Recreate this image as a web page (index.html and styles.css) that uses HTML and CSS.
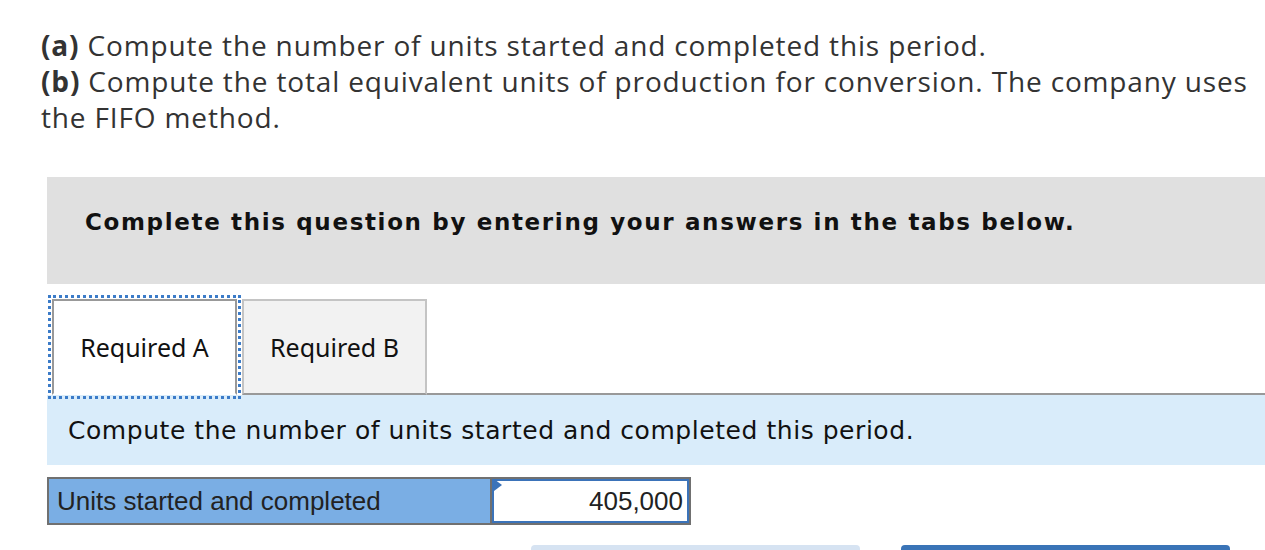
FILE: index.html
```html
<!DOCTYPE html>
<html>
<head>
<meta charset="utf-8">
<link rel="stylesheet" href="styles.css">
</head>
<body>
<div class="question">
  <p><b>(a)</b> Compute the number of units started and completed this period.</p>
  <p><b>(b)</b> Compute the total equivalent units of production for conversion. The company uses<br>the FIFO method.</p>
</div>
<div class="section">
  <div class="instructions">Complete this question by entering your answers in the tabs below.</div>
  <div class="tabs">
    <div class="tab tab-active">Required A</div>
    <div class="tab tab-inactive">Required B</div>
    <div class="tab-fill"></div>
  </div>
  <div class="prompt">Compute the number of units started and completed this period.</div>
  <div class="answer-row">
    <div class="answer-label">Units started and completed</div>
    <div class="answer-cell"><span class="marker"></span><span class="answer-value">405,000</span></div>
  </div>
  <div class="nav">
    <div class="nav-btn nav-prev"></div>
    <div class="nav-btn nav-next"></div>
  </div>
</div>
</body>
</html>
```
FILE: styles.css
```css
html, body {
  margin: 0;
  padding: 0;
  background: #fff;
  overflow: hidden;
}
.question {
  padding: 27px 0 0 41px;
  font-family: "Open Sans", "Lato", sans-serif;
  font-size: 28px;
  letter-spacing: 0.85px;
  line-height: 36px;
  color: #333;
  white-space: nowrap;
}
.question p {
  margin: 0;
}
.question b {
  font-weight: 700;
}
.section {
  margin: 42px 0 0 47px;
}
.instructions {
  background: #e0e0e0;
  height: 107px;
  box-sizing: border-box;
  display: flex;
  align-items: center;
  padding: 0 0 18px 38px;
  font-family: "DejaVu Sans", Verdana, sans-serif;
  font-weight: bold;
  font-size: 23px;
  letter-spacing: 1.65px;
  color: #111;
}
.tabs {
  display: flex;
  margin-top: 15px;
  height: 96px;
}
.tab {
  box-sizing: border-box;
  width: 185px;
  display: flex;
  align-items: center;
  justify-content: center;
  font-family: "Noto Sans", "DejaVu Sans", sans-serif;
  font-size: 25px;
  color: #111;
}
.tab-active {
  margin-left: 5px;
  border: 2px solid #999;
  border-bottom: 2px solid #fff;
  background: #fff;
  outline: 3px dotted #3b7bc8;
  outline-offset: 1px;
}
.tab-inactive {
  margin-left: 5px;
  border: 2px solid #c4c4c4;
  border-bottom: 2px solid #999;
  background: #f2f2f2;
}
.tab-fill {
  flex: 1;
  border-bottom: 2px solid #999;
}
.prompt {
  height: 70px;
  background: #d9ecfa;
  display: flex;
  align-items: center;
  padding-left: 21px;
  font-family: "DejaVu Sans", Verdana, sans-serif;
  font-size: 25px;
  letter-spacing: 0.55px;
  color: #111;
}
.answer-row {
  display: flex;
  margin-top: 12px;
  width: 644px;
  height: 48px;
  box-sizing: border-box;
  border: 2px solid #707070;
}
.answer-label {
  width: 443px;
  background: #7aaee4;
  border-right: 2px solid #707070;
  display: flex;
  align-items: center;
  padding-left: 8px;
  box-sizing: border-box;
  font-family: "Liberation Sans", Arial, sans-serif;
  font-size: 26px;
  color: #222;
}
.answer-cell {
  position: relative;
  flex: 1;
  border: 2px solid #3b73b9;
  background: #fff;
  display: flex;
  align-items: center;
  justify-content: flex-end;
  padding-right: 4px;
  font-family: "Liberation Sans", Arial, sans-serif;
  font-size: 26px;
  color: #222;
}
.marker {
  position: absolute;
  left: 0;
  top: -2px;
  width: 0;
  height: 0;
  border-top: 6px solid transparent;
  border-bottom: 6px solid transparent;
  border-left: 8px solid #3b73b9;
}
.nav {
  display: flex;
  margin-top: 20px;
  margin-left: 484px;
  gap: 41px;
}
.nav-btn {
  width: 329px;
  height: 40px;
  border-radius: 4px;
}
.nav-prev {
  background: #d6e3f2;
}
.nav-next {
  background: #3a74b7;
}
```
